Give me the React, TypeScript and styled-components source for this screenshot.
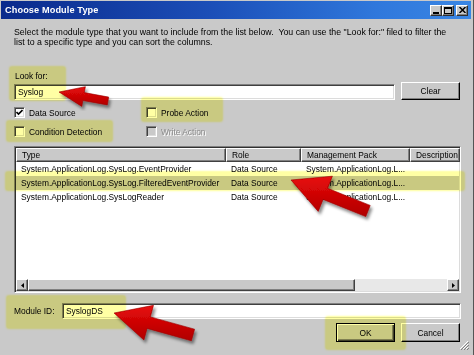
import styled, { createGlobalStyle } from "styled-components";

const GlobalStyle = createGlobalStyle`
  html, body { margin: 0; padding: 0; background: #c9c9c9; }
  body { font-family: "Liberation Sans", Arial, sans-serif; font-size: 8.4px; color: #000; }
  * { box-sizing: border-box; }
`;

const FACE = "#c9c9c9";

const Window = styled.div`
  position: relative;
  width: 474px;
  height: 355px;
  background: ${FACE};
  overflow: hidden;
  display: flex;
  flex-direction: column;
  border-right: 1px solid #555;
`;

const TitleBar = styled.div`
  height: 18px;
  margin: 1px 2px 0 1px;
  padding: 0 3px 0 4px;
  display: flex;
  align-items: center;
  background: linear-gradient(90deg, #0a2a8c 0%, #1c4fb8 45%, #2f78dc 80%, #3a86e4 100%);
`;

const Title = styled.div`
  flex: 1;
  color: #fff;
  font-weight: bold;
  font-size: 9.2px;
  letter-spacing: 0.1px;
`;

const TitleButtons = styled.div`
  display: flex;
  align-items: center;
`;

const TitleButton = styled.div<{ $gap?: boolean }>`
  width: 12px;
  height: 11px;
  margin-left: ${(p) => (p.$gap ? "2px" : "0")};
  background: ${FACE};
  border-top: 1px solid #fff;
  border-left: 1px solid #fff;
  border-right: 1px solid #303030;
  border-bottom: 1px solid #303030;
  box-shadow: inset -1px -1px #808080;
  display: flex;
  align-items: center;
  justify-content: center;
`;

const Content = styled.div`
  flex: 1;
  display: flex;
  flex-direction: column;
  padding: 0 12px 0 14px;
`;

const Description = styled.div`
  margin-top: 8px;
  line-height: 10px;
  font-size: 8.8px;
  white-space: nowrap;
`;

const FieldLabel = styled.div`
  margin-top: 24px;
  line-height: 10px;
  padding-left: 1px;
`;

const SearchRow = styled.div`
  margin-top: 1px;
  display: flex;
  align-items: flex-end;
  gap: 6px;
`;

const TextBox = styled.div`
  flex: 1;
  height: 16px;
  background: #fff;
  border-top: 1px solid #808080;
  border-left: 1px solid #808080;
  border-right: 1px solid #fff;
  border-bottom: 1px solid #fff;
  box-shadow: inset 1px 1px #404040, inset -1px -1px #dcdcdc;
  padding-left: 3px;
  display: flex;
  align-items: center;
  white-space: nowrap;
`;

const Button = styled.div<{ $default?: boolean }>`
  width: 59px;
  height: 19px;
  background: ${FACE};
  display: flex;
  align-items: center;
  justify-content: center;
  border-top: 1px solid ${(p) => (p.$default ? "#000" : "#fff")};
  border-left: 1px solid ${(p) => (p.$default ? "#000" : "#fff")};
  border-right: 1px solid #000;
  border-bottom: 1px solid #000;
  box-shadow: ${(p) =>
    p.$default
      ? "inset 1px 1px #fff, inset -1px -1px #404040, inset -2px -2px #808080"
      : "inset -1px -1px #808080"};
`;

const ClearButton = styled(Button)`
  height: 18px;
  margin-right: 1px;
`;

const OptionsGrid = styled.div`
  margin-top: 3px;
  display: grid;
  grid-template-columns: 132px 1fr;
  grid-auto-rows: 19px;
`;

const Option = styled.div<{ $disabled?: boolean }>`
  display: flex;
  align-items: center;
  gap: 4px;
  color: ${(p) => (p.$disabled ? "#8a8a8a" : "#000")};
  text-shadow: ${(p) => (p.$disabled ? "1px 1px #fff" : "none")};
`;

const Box = styled.div<{ $disabled?: boolean }>`
  width: 11px;
  height: 11px;
  background: ${(p) => (p.$disabled ? FACE : "#fff")};
  border-top: 1px solid #808080;
  border-left: 1px solid #808080;
  border-right: 1px solid #fff;
  border-bottom: 1px solid #fff;
  box-shadow: inset 1px 1px #404040, inset -1px -1px #dcdcdc;
  display: flex;
  align-items: center;
  justify-content: center;
`;

const List = styled.div`
  margin-top: 5px;
  height: 147px;
  display: flex;
  flex-direction: column;
  border-top: 1px solid #808080;
  border-left: 1px solid #808080;
  border-right: 1px solid #fff;
  border-bottom: 1px solid #fff;
  box-shadow: inset 1px 1px #303030, inset -1px -1px #dcdcdc;
  padding: 1px;
  background: #fff;
`;

const HeaderRow = styled.div`
  display: flex;
  height: 14px;
  background: ${FACE};
`;

const HeaderCell = styled.div<{ $w: number }>`
  width: ${(p) => p.$w}px;
  flex: none;
  padding-left: 5px;
  display: flex;
  align-items: center;
  border-top: 1px solid #fff;
  border-left: 1px solid #fff;
  border-right: 1px solid #404040;
  border-bottom: 1px solid #404040;
  box-shadow: inset -1px -1px #808080;
  white-space: nowrap;
  overflow: hidden;
`;

const Rows = styled.div`
  flex: 1;
  background: #fff;
`;

const Row = styled.div<{ $selected?: boolean }>`
  display: flex;
  height: 14px;
  align-items: center;
  background: ${(p) => (p.$selected ? FACE : "#fff")};
`;

const Cell = styled.div<{ $w: number }>`
  width: ${(p) => p.$w}px;
  flex: none;
  padding-left: 5px;
  white-space: nowrap;
  overflow: hidden;
`;

const ScrollBar = styled.div`
  height: 12px;
  display: flex;
  background: #e8e8e8;
`;

const ScrollArrow = styled.div`
  width: 12px;
  height: 12px;
  flex: none;
  background: ${FACE};
  border-top: 1px solid #fff;
  border-left: 1px solid #fff;
  border-right: 1px solid #404040;
  border-bottom: 1px solid #404040;
  box-shadow: inset -1px -1px #808080;
  display: flex;
  align-items: center;
  justify-content: center;
`;

const Thumb = styled(ScrollArrow)<{ $w: number }>`
  width: ${(p) => p.$w}px;
`;

const Track = styled.div`
  flex: 1;
`;

const ModuleRow = styled.div`
  margin-top: 10px;
  display: flex;
  align-items: center;
`;

const ModuleLabel = styled.div`
  width: 48px;
  flex: none;
`;

const ButtonRow = styled.div`
  margin-top: 4px;
  display: flex;
  justify-content: flex-end;
  gap: 6px;
  padding-right: 1px;
`;

const Highlight = styled.div<{ $x: number; $y: number; $w: number; $h: number }>`
  position: absolute;
  left: ${(p) => p.$x}px;
  top: ${(p) => p.$y}px;
  width: ${(p) => p.$w}px;
  height: ${(p) => p.$h}px;
  background: #ffffa4;
  mix-blend-mode: multiply;
  border-radius: 2px;
  box-shadow: 0 0 2px 1px #ffff9a;
  pointer-events: none;
`;

const Grip = styled.svg`
  position: absolute;
  right: 4px;
  bottom: 5px;
`;

const Overlay = styled.svg`
  position: absolute;
  left: 0;
  top: 0;
  pointer-events: none;
`;

type P = [number, number];

const arrowPoints = (tip: P, tail: P, headLen: number, headHalf: number, shaftHalf: number) => {
  const dx = tail[0] - tip[0];
  const dy = tail[1] - tip[1];
  const len = Math.hypot(dx, dy);
  const ux = dx / len;
  const uy = dy / len;
  const px = -uy;
  const py = ux;
  const bx = tip[0] + ux * headLen;
  const by = tip[1] + uy * headLen;
  const pts: P[] = [
    tip,
    [bx + px * headHalf, by + py * headHalf],
    [bx + px * shaftHalf, by + py * shaftHalf],
    [tail[0] + px * shaftHalf, tail[1] + py * shaftHalf],
    [tail[0] - px * shaftHalf, tail[1] - py * shaftHalf],
    [bx - px * shaftHalf, by - py * shaftHalf],
    [bx - px * headHalf, by - py * headHalf],
  ];
  return pts.map((p) => p.map((v) => v.toFixed(1)).join(",")).join(" ");
};

const arrows = [
  arrowPoints([59, 92], [108, 101], 25, 10, 4),
  arrowPoints([291, 180], [368, 211], 37, 19, 6),
  arrowPoints([114, 313], [193, 335], 36, 18, 6),
];

const cols = [210, 75, 109, 50];

const rows = [
  { type: "System.ApplicationLog.SysLog.EventProvider", role: "Data Source", pack: "System.ApplicationLog.L..." },
  { type: "System.ApplicationLog.SysLog.FilteredEventProvider", role: "Data Source", pack: "System.ApplicationLog.L...", selected: true },
  { type: "System.ApplicationLog.SysLogReader", role: "Data Source", pack: "System.ApplicationLog.L..." },
];

const Check = () => (
  <svg width="7" height="7" viewBox="0 0 7 7">
    <path d="M0.5 3 L2.5 5 L6.5 1" fill="none" stroke="#000" strokeWidth="1.6" />
  </svg>
);

export default function App() {
  return (
    <>
      <GlobalStyle />
      <Window>
        <TitleBar>
          <Title>Choose Module Type</Title>
          <TitleButtons>
            <TitleButton>
              <svg width="6" height="7" viewBox="0 0 6 7">
                <rect x="0" y="5" width="6" height="2" fill="#000" />
              </svg>
            </TitleButton>
            <TitleButton>
              <svg width="8" height="7" viewBox="0 0 8 7">
                <rect x="0.5" y="0.5" width="7" height="6" fill="none" stroke="#000" />
                <rect x="0" y="0" width="8" height="2" fill="#000" />
              </svg>
            </TitleButton>
            <TitleButton $gap>
              <svg width="7" height="6" viewBox="0 0 7 6">
                <path d="M0.5 0 L6.5 6 M6.5 0 L0.5 6" stroke="#000" strokeWidth="1.5" />
              </svg>
            </TitleButton>
          </TitleButtons>
        </TitleBar>
        <Content>
          <Description>
            Select the module type that you want to include from the list below.&nbsp; You can use the "Look for:" filed to filter the
            <br />
            list to a specific type and you can sort the columns.
          </Description>
          <FieldLabel>Look for:</FieldLabel>
          <SearchRow>
            <TextBox>Syslog</TextBox>
            <ClearButton>Clear</ClearButton>
          </SearchRow>
          <OptionsGrid>
            <Option>
              <Box>
                <Check />
              </Box>
              Data Source
            </Option>
            <Option>
              <Box />
              Probe Action
            </Option>
            <Option>
              <Box />
              Condition Detection
            </Option>
            <Option $disabled>
              <Box $disabled />
              Write Action
            </Option>
          </OptionsGrid>
          <List>
            <HeaderRow>
              <HeaderCell $w={cols[0]}>Type</HeaderCell>
              <HeaderCell $w={cols[1]}>Role</HeaderCell>
              <HeaderCell $w={cols[2]}>Management Pack</HeaderCell>
              <HeaderCell $w={cols[3]}>Description</HeaderCell>
            </HeaderRow>
            <Rows>
              {rows.map((r) => (
                <Row key={r.type} $selected={r.selected}>
                  <Cell $w={cols[0]}>{r.type}</Cell>
                  <Cell $w={cols[1]}>{r.role}</Cell>
                  <Cell $w={cols[2]}>{r.pack}</Cell>
                  <Cell $w={cols[3]} />
                </Row>
              ))}
            </Rows>
            <ScrollBar>
              <ScrollArrow>
                <svg width="3" height="5" viewBox="0 0 3 5">
                  <path d="M3 0 L0 2.5 L3 5 Z" fill="#000" />
                </svg>
              </ScrollArrow>
              <Thumb $w={327} />
              <Track />
              <ScrollArrow>
                <svg width="3" height="5" viewBox="0 0 3 5">
                  <path d="M0 0 L3 2.5 L0 5 Z" fill="#000" />
                </svg>
              </ScrollArrow>
            </ScrollBar>
          </List>
          <ModuleRow>
            <ModuleLabel>Module ID:</ModuleLabel>
            <TextBox>SyslogDS</TextBox>
          </ModuleRow>
          <ButtonRow>
            <Button $default>OK</Button>
            <Button>Cancel</Button>
          </ButtonRow>
        </Content>

        <Highlight $x={10} $y={67} $w={55} $h={33} />
        <Highlight $x={142} $y={98} $w={80} $h={23} />
        <Highlight $x={7} $y={121} $w={105} $h={20} />
        <Highlight $x={6} $y={172} $w={458} $h={18} />
        <Highlight $x={7} $y={296} $w={118} $h={32} />
        <Highlight $x={326} $y={317} $w={79} $h={32} />

        <Grip width="10" height="10" viewBox="0 0 10 10">
          <path d="M9 1 L1 9 M9 4 L4 9 M9 7 L7 9" stroke="#fff" strokeWidth="1" />
          <path d="M10 2 L2 10 M10 5 L5 10 M10 8 L8 10" stroke="#808080" strokeWidth="1" />
        </Grip>

        <Overlay width="474" height="355" viewBox="0 0 474 355">
          <defs>
            <linearGradient id="red" x1="0" y1="0" x2="0" y2="1">
              <stop offset="0" stopColor="#e80a0a" />
              <stop offset="1" stopColor="#b00000" />
            </linearGradient>
            <filter id="shadow" x="-20%" y="-20%" width="140%" height="140%">
              <feDropShadow dx="2" dy="3" stdDeviation="1.5" floodColor="#000" floodOpacity="0.45" />
            </filter>
          </defs>
          {arrows.map((pts, i) => (
            <polygon key={i} points={pts} fill="url(#red)" stroke="#9a0000" strokeWidth="0.6" filter="url(#shadow)" />
          ))}
        </Overlay>
      </Window>
    </>
  );
}
